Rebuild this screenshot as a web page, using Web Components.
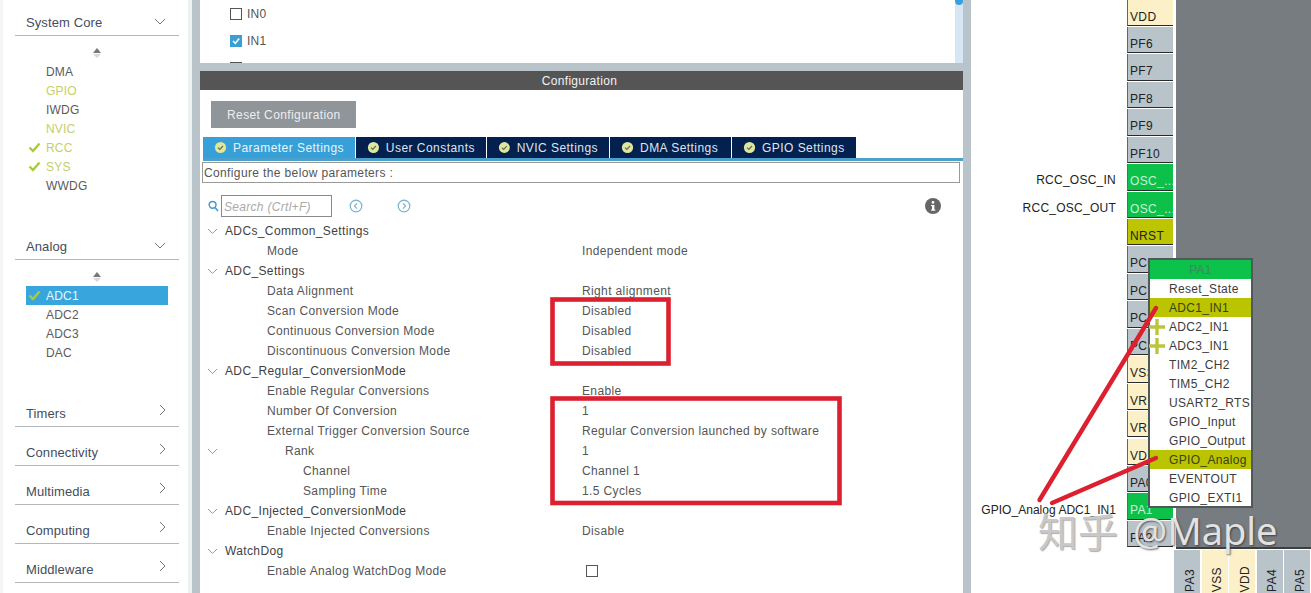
<!DOCTYPE html>
<html>
<head>
<meta charset="utf-8">
<title>ADC1 configuration</title>
<style>
html,body{margin:0;padding:0;height:100%;overflow:hidden;background:#b9c4ca;}
body{font-family:"Liberation Sans",Arial,sans-serif;}
</style>
</head>
<body>
<cube-app></cube-app>

<script>
const sharedFont = `font-family:"Liberation Sans",Arial,sans-serif;font-size:12px;letter-spacing:.37px;`;

function makeEl(name, css, html, extra){
    class El extends HTMLElement{
        constructor(){
            super();
            this.attachShadow({mode:'open'});
            this.shadowRoot.innerHTML = `<style>${css}</style>${html}`;
        }
        connectedCallback(){
            if(extra) extra.call(this);
        }
    }
    customElements.define(name, El);
}

const chevronDown = `<svg width="12" height="7" viewBox="0 0 12 7"><path d="M1 1l5 5 5-5" fill="none" stroke="#777" stroke-width="1"/></svg>`;
const chevronRight = `<svg width="7" height="12" viewBox="0 0 7 12"><path d="M1 1l5 5-5 5" fill="none" stroke="#777" stroke-width="1"/></svg>`;
const tick = `<svg width="13" height="11" viewBox="0 0 13 11"><path d="M1.5 5.5l3.5 3.5 6.5-7.5" fill="none" stroke="#a9cc3c" stroke-width="2.4"/></svg>`;

// left column
makeEl('side-head', `
:host{display:flex;align-items:flex-end;justify-content:space-between;height:23px;margin:0 9px 0 12px;padding:0 13px 0 11px;border-bottom:1px solid #b4b8bc;color:#454c5c;${sharedFont}font-size:13px;letter-spacing:.1px;box-sizing:content-box;}
span{padding-bottom:4px;line-height:16px;}
i{display:flex;font-style:normal;padding-bottom:10px;}
`, `<span><slot></slot></span><i></i>`, function(){
    this.shadowRoot.querySelector('i').innerHTML = this.hasAttribute('open') ? chevronDown : chevronRight;
});

makeEl('side-item', `
:host{display:flex;align-items:center;height:19px;margin-left:23px;width:142px;color:#5a5a5a;${sharedFont}letter-spacing:.2px;}
:host([on]){color:#c4cf66;}
:host([sel]){background:#38a6dc;color:#e8f6fc;}
i{display:flex;width:20px;padding-left:2px;box-sizing:border-box;}
`, `<i></i><slot></slot>`, function(){
    if(this.hasAttribute('ok')) this.shadowRoot.querySelector('i').innerHTML = tick;
});

makeEl('side-arrows', `
:host{display:flex;justify-content:center;width:164px;margin-left:12px;height:14px;}
`, `<svg width="10" height="14" viewBox="0 0 10 14"><path d="M5 2l4 5H1z" fill="#777"/><path d="M1 8h8l-4 4z" fill="#d8d8d8"/></svg>`);

makeEl('side-panel', `
:host{display:block;width:185px;height:593px;padding-top:12px;background:#fff;border-left:3px solid #f3f5f6;border-right:4px solid #eef1f2;box-sizing:content-box;flex:none;overflow:hidden;}
`, `<slot></slot>`);

// configuration
makeEl('check-box', `
:host{display:inline-block;width:12px;height:12px;box-sizing:border-box;border:1px solid #555;background:#fff;}
:host([on]){background:#38a0d4;border-color:#38a0d4;}
svg{display:none;}
:host([on]) svg{display:block;}
`, `<svg width="10" height="10" viewBox="0 0 10 10"><path d="M2 5l2.3 2.3L8.2 2.5" fill="none" stroke="#fff" stroke-width="1.5"/></svg>`);

makeEl('mode-panel', `
:host{display:flex;height:63px;background:#fff;overflow:hidden;flex:none;}
.list{flex:1;padding:0 0 0 30px;color:#555;${sharedFont}letter-spacing:.2px;}
.row{display:flex;align-items:center;gap:5px;height:27px;}
.bar{position:relative;width:8px;background:#d6e6f4;}
.bar b{position:absolute;left:0;top:-3px;width:8px;height:8px;border-radius:50%;background:#38a0dc;}
`, `<div class="list">
<div class="row"><check-box></check-box>IN0</div>
<div class="row"><check-box on></check-box>IN1</div>
<div class="row"><check-box></check-box>IN2</div>
</div><div class="bar"><b></b></div>`);

makeEl('cfg-tab', `
:host{display:flex;align-items:center;height:21px;padding:0 11px;gap:6px;background:#04204f;color:#dfe6ee;${sharedFont}letter-spacing:.46px;box-sizing:border-box;white-space:nowrap;}
:host([sel]){background:#38a0d8;color:#e6f5fb;}
`, `<svg width="13" height="13" viewBox="0 0 13 13"><circle cx="6.5" cy="6.5" r="5.6" fill="#dfe79c"/><path d="M4 6.6l1.8 1.8 3.2-3.4" fill="none" stroke="#5f6a58" stroke-width="1.2"/></svg><slot></slot>`);

makeEl('param-row', `
:host{display:grid;grid-template-columns:382px 1fr;height:20px;align-items:center;color:#555;${sharedFont}}
:host([group]){color:#3f3f3f;}
.name{display:flex;align-items:center;white-space:nowrap;}
.arrow{display:flex;width:25px;padding-left:7px;box-sizing:border-box;flex:none;}
.ind{flex:none;}
.val{white-space:nowrap;}
`, `<div class="name"><span class="arrow"></span><span class="ind"></span><slot></slot></div><div class="val"><slot name="v"></slot></div>`, function(){
    const lvl = +(this.getAttribute('lvl') || 0);
    this.shadowRoot.querySelector('.ind').style.width = [0,42,60,78][lvl] + 'px';
    if(this.hasAttribute('open')) this.shadowRoot.querySelector('.arrow').innerHTML = `<svg width="11" height="7" viewBox="0 0 11 7"><path d="M1 1l4.5 4.5L10 1" fill="none" stroke="#999" stroke-width="1"/></svg>`;
});

makeEl('config-panel', `
:host{display:flex;flex-direction:column;flex:1;min-height:0;background:#fff;margin-top:8px;${sharedFont}}
.title{height:19px;background:#555;color:#f2f2f2;display:flex;align-items:center;justify-content:center;flex:none;letter-spacing:.3px;padding-right:4px;}
.body{flex:1;margin-right:3px;background:#fff;padding-top:11px;}
.reset{display:flex;align-items:center;width:145px;height:27px;margin-left:11px;padding-left:16px;box-sizing:border-box;background:#90959a;color:#eceeef;letter-spacing:.4px;}
.tabs{display:flex;gap:1px;margin:9px -3px 0 3px;border-bottom:3px solid #4ba0cc;box-sizing:content-box;}
.hint{height:21px;margin:1px 0 0 2px;padding-left:1px;border:1px solid #999;box-sizing:border-box;display:flex;align-items:center;color:#555;}
.tools{display:flex;align-items:center;height:22px;margin-top:12px;padding-left:8px;}
.search{width:111px;height:22px;margin-left:2px;border:1px solid #8a8a8a;box-sizing:border-box;padding:1px 0 0 2px;color:#aaa;font-style:italic;display:flex;align-items:center;letter-spacing:.3px;}
.nav{margin-left:17px;}
.nav2{margin-left:34px;}
.info{margin-left:514px;}
.tree{margin-top:4px;}
`, `<div class="title">Configuration</div>
<div class="body">
<div class="reset">Reset Configuration</div>
<div class="tabs">
<cfg-tab sel style="width:152px">Parameter Settings</cfg-tab>
<cfg-tab style="width:130px">User Constants</cfg-tab>
<cfg-tab style="width:122px">NVIC Settings</cfg-tab>
<cfg-tab style="width:121px">DMA Settings</cfg-tab>
<cfg-tab style="width:124px">GPIO Settings</cfg-tab>
</div>
<div class="hint">Configure the below parameters :</div>
<div class="tools">
<svg width="11" height="12" viewBox="0 0 11 12"><circle cx="4.6" cy="4.8" r="3.4" fill="none" stroke="#3f9dcc" stroke-width="1.5"/><path d="M7 7.5l3 3.5" stroke="#3f9dcc" stroke-width="1.6"/></svg>
<div class="search">Search (Crtl+F)</div>
<svg class="nav" width="14" height="14" viewBox="0 0 14 14"><circle cx="7" cy="7" r="5.8" fill="none" stroke="#74b2cc" stroke-width="1.2"/><path d="M8 4.4L5.4 7 8 9.6" fill="none" stroke="#74b2cc" stroke-width="1.1"/></svg>
<svg class="nav2" width="14" height="14" viewBox="0 0 14 14"><circle cx="7" cy="7" r="5.8" fill="none" stroke="#74b2cc" stroke-width="1.2"/><path d="M6 4.4L8.6 7 6 9.6" fill="none" stroke="#74b2cc" stroke-width="1.1"/></svg>
<svg class="info" width="16" height="16" viewBox="0 0 16 16"><circle cx="8" cy="8" r="8" fill="#666"/><rect x="7" y="7" width="2.4" height="5.4" fill="#fff"/><rect x="6" y="7" width="3" height="1" fill="#fff"/><rect x="6" y="11.6" width="4.4" height="1" fill="#fff"/><circle cx="8" cy="4.4" r="1.3" fill="#fff"/></svg>
</div>
<div class="tree">
<param-row group open>ADCs_Common_Settings</param-row>
<param-row lvl="1">Mode<span slot="v">Independent mode</span></param-row>
<param-row group open>ADC_Settings</param-row>
<param-row lvl="1">Data Alignment<span slot="v">Right alignment</span></param-row>
<param-row lvl="1">Scan Conversion Mode<span slot="v">Disabled</span></param-row>
<param-row lvl="1">Continuous Conversion Mode<span slot="v">Disabled</span></param-row>
<param-row lvl="1">Discontinuous Conversion Mode<span slot="v">Disabled</span></param-row>
<param-row group open>ADC_Regular_ConversionMode</param-row>
<param-row lvl="1">Enable Regular Conversions<span slot="v">Enable</span></param-row>
<param-row lvl="1">Number Of Conversion<span slot="v">1</span></param-row>
<param-row lvl="1">External Trigger Conversion Source<span slot="v">Regular Conversion launched by software</span></param-row>
<param-row lvl="2" open>Rank<span slot="v">1</span></param-row>
<param-row lvl="3">Channel<span slot="v">Channel 1</span></param-row>
<param-row lvl="3">Sampling Time<span slot="v">1.5 Cycles</span></param-row>
<param-row group open>ADC_Injected_ConversionMode</param-row>
<param-row lvl="1">Enable Injected Conversions<span slot="v">Disable</span></param-row>
<param-row group open>WatchDog</param-row>
<param-row lvl="1">Enable Analog WatchDog Mode<check-box slot="v" style="margin:3px 0 0 4px"></check-box></param-row>
</div>
</div>`);

makeEl('middle-col', `
:host{display:flex;flex-direction:column;width:763px;height:593px;margin-left:8px;flex:none;}
`, `<mode-panel></mode-panel><config-panel></config-panel>`);

// pinout
makeEl('chip-pin', `
:host{display:flex;justify-content:flex-end;align-items:center;height:27.45px;${sharedFont}color:#222;}
.lab{margin-right:11px;white-space:nowrap;padding-top:6px;letter-spacing:.25px;}
:host([tight]) .lab{letter-spacing:.03px;}
.pin{width:46px;height:26.4px;box-sizing:border-box;background:#b9c3ca;color:#222;padding:9px 0 0 2px;border-bottom:1px solid #2a2a2a;border-left:1px solid #666;overflow:hidden;white-space:nowrap;line-height:16px;}
:host([kind=power]) .pin{background:#fbf0c8;}
:host([kind=green]) .pin{background:#0cc04a;color:#c9f3d6;}
:host([kind=olive]) .pin{background:#bdc400;}
`, `<span class="lab"><slot name="label"></slot></span><div class="pin"><slot></slot></div>`);

makeEl('bottom-pin', `
:host{display:flex;justify-content:center;align-items:flex-end;width:26px;height:43px;box-sizing:border-box;background:#b9c3ca;padding:0 0 1px 5px;${sharedFont}color:#222;}
:host([kind=power]){background:#fbf0c8;}
span{writing-mode:vertical-rl;transform:rotate(180deg);white-space:nowrap;}
`, `<span><slot></slot></span>`);

makeEl('popup-item', `
:host{display:flex;align-items:center;position:relative;height:19px;padding-left:19px;color:#3c3c3c;white-space:nowrap;${sharedFont}letter-spacing:.34px;}
:host([sel]){background:#bac400;color:#3a4210;}
svg{position:absolute;left:-1px;top:2px;display:none;}
:host([plus]) svg{display:block;}
`, `<svg width="16" height="16" viewBox="0 0 16 16"><path d="M8 0v16M0 8h16" stroke="#bcc63c" stroke-width="3.4"/></svg><slot></slot>`);

makeEl('pin-popup', `
:host{position:absolute;left:177px;top:258px;width:105px;height:250px;box-sizing:border-box;border:2px solid #50585a;background:#fff;${sharedFont}}
.head{height:19px;background:#0cc24a;color:#3a8a5a;display:flex;align-items:center;justify-content:center;letter-spacing:.2px;}
`, `<div class="head">PA1</div><div><slot></slot></div>`);

makeEl('pinout-view', `
:host{display:flex;position:relative;flex:1;min-width:0;height:593px;background:#fff;overflow:hidden;}
.pins{width:202px;flex:none;margin-top:-1px;}
.right{flex:1;display:flex;flex-direction:column;padding-left:3px;}
.chip{height:547px;flex:none;background:#777c80;border-bottom:2px solid #3c3f40;box-sizing:content-box;}
.under{display:flex;gap:1.5px;margin-top:1px;margin-left:-2px;}
`, `<div class="pins"><slot name="pins"></slot></div>
<div class="right"><div class="chip"></div><div class="under"><slot name="bottom"></slot></div></div>
<slot></slot>`);

// annotations on top of the screenshot
makeEl('red-marks', `
:host{position:absolute;left:0;top:0;width:1311px;height:593px;pointer-events:none;}
svg{display:block;}
`, `<svg width="1311" height="593" viewBox="0 0 1311 593">
<g fill="none" stroke="#dc2030" stroke-width="4.6">
<rect x="552.5" y="299.5" width="116" height="64"/>
<rect x="552.5" y="398.5" width="287" height="104.5"/>
<path d="M1039.5 500L1156 308" stroke-linecap="round" stroke-width="4.4"/>
<path d="M1052 503L1156 458" stroke-linecap="round" stroke-width="4.4"/>
</g></svg>`);

makeEl('water-mark', `
:host{position:absolute;left:1038px;top:505px;height:50px;display:flex;align-items:center;white-space:nowrap;color:#c8c8c8;text-shadow:1px 1px 1px rgba(90,90,90,.5);font-family:"Noto Sans CJK SC","Noto Sans",sans-serif;font-size:40px;pointer-events:none;}
.en{font-family:"Noto Sans","Open Sans",sans-serif;font-size:38px;margin-left:15px;color:#e2e2e2;text-shadow:1px 1px 2px rgba(40,40,40,.7);}
`, `<span>知乎</span><span class="en">@Maple</span>`);

makeEl('cube-app', `
:host{display:flex;position:relative;width:1311px;height:593px;overflow:hidden;background:#b9c4ca;}
`, `
<side-panel>
<side-head open>System Core</side-head>
<side-arrows style="margin-top:10px"></side-arrows>
<div style="height:2px"></div>
<side-item>DMA</side-item>
<side-item on>GPIO</side-item>
<side-item>IWDG</side-item>
<side-item on>NVIC</side-item>
<side-item on ok>RCC</side-item>
<side-item on ok>SYS</side-item>
<side-item>WWDG</side-item>
<div style="height:41px"></div>
<side-head open>Analog</side-head>
<side-arrows style="margin-top:10px"></side-arrows>
<div style="height:2px"></div>
<side-item sel ok>ADC1</side-item>
<side-item>ADC2</side-item>
<side-item>ADC3</side-item>
<side-item>DAC</side-item>
<div style="height:41px"></div>
<side-head>Timers</side-head>
<div style="height:15px"></div>
<side-head>Connectivity</side-head>
<div style="height:15px"></div>
<side-head>Multimedia</side-head>
<div style="height:15px"></div>
<side-head>Computing</side-head>
<div style="height:15px"></div>
<side-head>Middleware</side-head>
</side-panel>
<middle-col></middle-col>
<div style="width:8px;flex:none"></div>
<pinout-view>
<chip-pin slot="pins" kind="power">VDD</chip-pin>
<chip-pin slot="pins">PF6</chip-pin>
<chip-pin slot="pins">PF7</chip-pin>
<chip-pin slot="pins">PF8</chip-pin>
<chip-pin slot="pins">PF9</chip-pin>
<chip-pin slot="pins">PF10</chip-pin>
<chip-pin slot="pins" kind="green"><span slot="label">RCC_OSC_IN</span>OSC_...</chip-pin>
<chip-pin slot="pins" kind="green"><span slot="label">RCC_OSC_OUT</span>OSC_...</chip-pin>
<chip-pin slot="pins" kind="olive">NRST</chip-pin>
<chip-pin slot="pins">PC0</chip-pin>
<chip-pin slot="pins">PC1</chip-pin>
<chip-pin slot="pins">PC2</chip-pin>
<chip-pin slot="pins">PC3</chip-pin>
<chip-pin slot="pins" kind="power">VSS</chip-pin>
<chip-pin slot="pins" kind="power">VREF-</chip-pin>
<chip-pin slot="pins" kind="power">VREF+</chip-pin>
<chip-pin slot="pins" kind="power">VDD</chip-pin>
<chip-pin slot="pins">PA0</chip-pin>
<chip-pin slot="pins" kind="green" tight><span slot="label">GPIO_Analog ADC1_IN1</span>PA1</chip-pin>
<chip-pin slot="pins">PA2</chip-pin>
<bottom-pin slot="bottom">PA3</bottom-pin>
<bottom-pin slot="bottom" kind="power">VSS</bottom-pin>
<bottom-pin slot="bottom" kind="power">VDD</bottom-pin>
<bottom-pin slot="bottom">PA4</bottom-pin>
<bottom-pin slot="bottom">PA5</bottom-pin>
<pin-popup>
<popup-item>Reset_State</popup-item>
<popup-item sel>ADC1_IN1</popup-item>
<popup-item plus>ADC2_IN1</popup-item>
<popup-item plus>ADC3_IN1</popup-item>
<popup-item>TIM2_CH2</popup-item>
<popup-item>TIM5_CH2</popup-item>
<popup-item>USART2_RTS</popup-item>
<popup-item>GPIO_Input</popup-item>
<popup-item>GPIO_Output</popup-item>
<popup-item sel>GPIO_Analog</popup-item>
<popup-item>EVENTOUT</popup-item>
<popup-item>GPIO_EXTI1</popup-item>
</pin-popup>
</pinout-view>
<red-marks></red-marks>
<water-mark></water-mark>
`);
</script>
</body>
</html>
